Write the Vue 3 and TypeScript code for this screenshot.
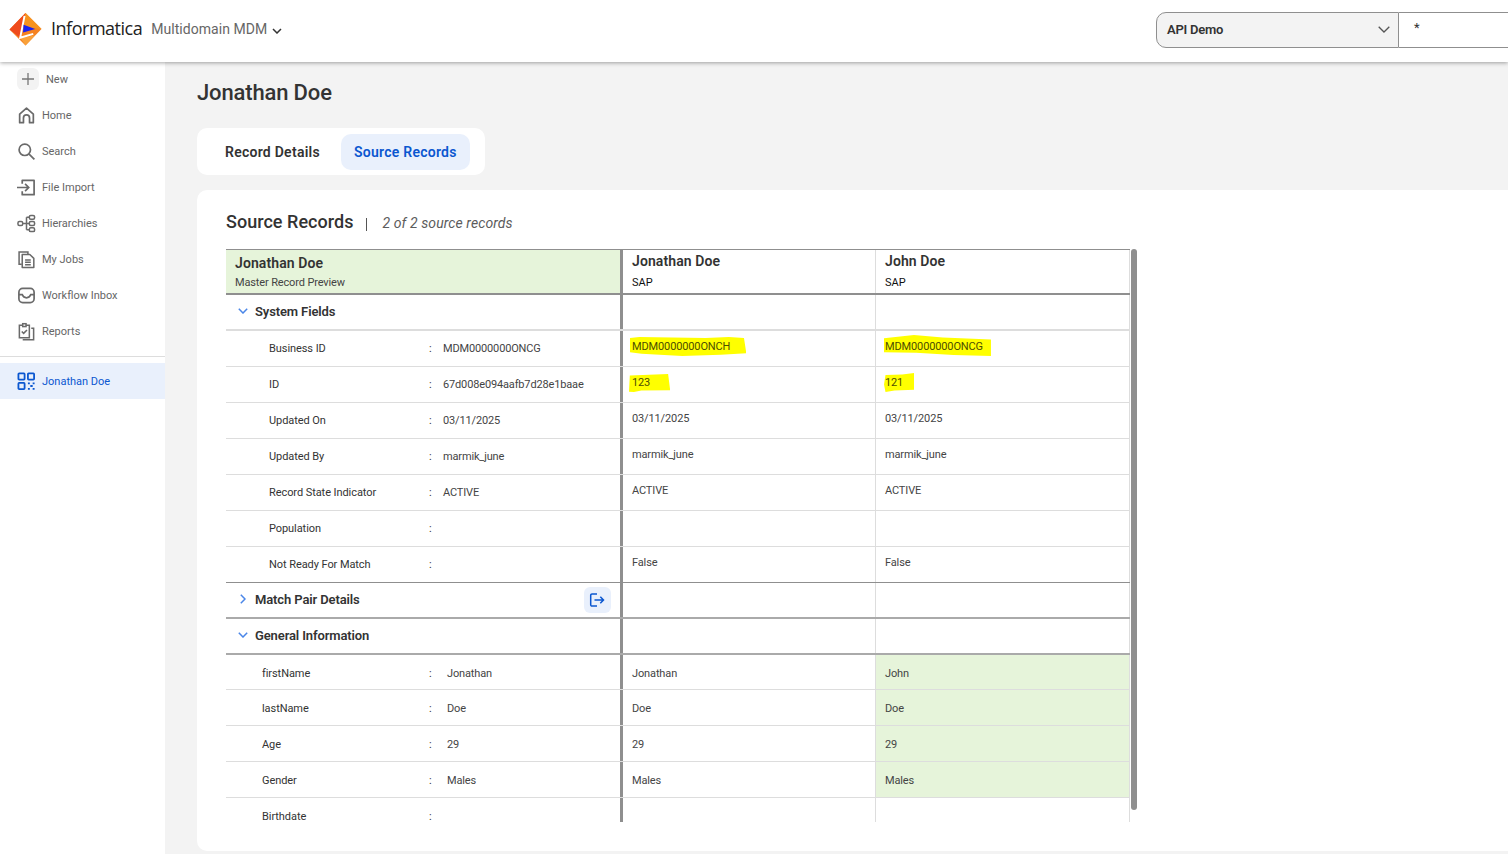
<script setup lang="ts">
interface Row { label: string; master: string; a: string; b: string; ma?: string; mb?: string }
const nav = ['Home', 'Search', 'File Import', 'Hierarchies', 'My Jobs', 'Workflow Inbox', 'Reports']
const systemRows: Row[] = [
  { label: 'Business ID', master: 'MDM0000000ONCG', a: 'MDM0000000ONCH', b: 'MDM0000000ONCG', ma: 'mk m1', mb: 'mk m2' },
  { label: 'ID', master: '67d008e094aafb7d28e1baae', a: '123', b: '121', ma: 'mk m3', mb: 'mk m4' },
  { label: 'Updated On', master: '03/11/2025', a: '03/11/2025', b: '03/11/2025' },
  { label: 'Updated By', master: 'marmik_june', a: 'marmik_june', b: 'marmik_june' },
  { label: 'Record State Indicator', master: 'ACTIVE', a: 'ACTIVE', b: 'ACTIVE' },
  { label: 'Population', master: '', a: '', b: '' },
  { label: 'Not Ready For Match', master: '', a: 'False', b: 'False' },
]
const generalRows = [
  { label: 'firstName', master: 'Jonathan', a: 'Jonathan', b: 'John', green: true },
  { label: 'lastName', master: 'Doe', a: 'Doe', b: 'Doe', green: true },
  { label: 'Age', master: '29', a: '29', b: '29', green: true },
  { label: 'Gender', master: 'Males', a: 'Males', b: 'Males', green: true },
  { label: 'Birthdate', master: '', a: '', b: '', green: false },
]
</script>

<template>
  <div class="page">
    <header class="top">
      <svg class="logo" viewBox="0 0 34 34" width="33" height="33">
        <polygon points="17,0 33.500,16.500 17,33.500 0.500,17" fill="#f58220" />
        <polygon points="0.500,17 17,0 12,26" fill="#ef4a1c" />
        <polygon points="17,0 33.500,16.500 21,15 14,12" fill="#f7931e" />
        <polygon points="12,26 17,33.500 27,23 17,25" fill="#f9a13a" />
        <polyline points="16,3 11.500,25.500 25,21.500" fill="none" stroke="#fff" stroke-width="2" />
        <polygon points="15,12 27,16.500 14.500,20" fill="#1a22f0" />
      </svg>
      <span class="brand">Informatica</span>
      <span class="product">Multidomain MDM</span>
      <svg class="prod-chev" viewBox="0 0 10 6" width="10" height="6"><path d="M1 1l4 4 4-4" fill="none" stroke="#333" stroke-width="1.500" /></svg>
      <div class="search">
        <div class="select">
          <span>API Demo</span>
          <svg viewBox="0 0 12 7" width="12" height="7"><path d="M.7.7l5.300 5.300 5.300-5.300" fill="none" stroke="#555" stroke-width="1.300" /></svg>
        </div>
        <div class="query">*</div>
      </div>
    </header>

    <div class="body">
      <aside class="side">
        <div class="new">
          <span class="plus">
            <svg viewBox="0 0 14 14" width="14" height="14"><path d="M7 1v12M1 7h12" stroke="#777" stroke-width="1.300" fill="none" /></svg>
          </span>
          <span>New</span>
        </div>
        <div v-for="n in nav" :key="n" class="nav">
          <svg viewBox="0 0 20 20" width="19" height="19" fill="none" stroke="#6a6a6a" stroke-width="1.800">
            <path v-if="n === 'Home'" d="M2.800 17.500V8.600L10 2.300l7.200 6.300v8.900h-4v-5a3.200 3.200 0 0 0-6.400 0v5z" stroke-linejoin="round" />
            <g v-else-if="n === 'Search'"><circle cx="8.200" cy="8.200" r="6" /><path d="M12.700 12.700l5.600 5.600" /></g>
            <g v-else-if="n === 'File Import'"><path d="M5.500 6V2.500h12.500v15H5.500V14" stroke-linejoin="round" /><path d="M0 10h12M8.500 6.300L12.300 10l-3.800 3.700" /></g>
            <g v-else-if="n === 'Hierarchies'" stroke-width="1.600"><rect x="1" y="8" width="5" height="4" rx="1.500" /><rect x="13" y="1.500" width="5.500" height="4" rx="1.500" /><rect x="13" y="8" width="5.500" height="4" rx="1.500" /><rect x="13" y="14.500" width="5.500" height="4" rx="1.500" /><path d="M6 10h7M10 3.500V16.500M10 3.500h3M10 16.500h3" /></g>
            <g v-else-if="n === 'My Jobs'" stroke-width="1.600"><path d="M5 15H2.200V2h9.300v2.500" /><path d="M5.500 4.800h8l4.200 4v9.500H5.500z" stroke-linejoin="round" /><path d="M8.500 10.500h6M8.500 13h6M8.500 15.500h6" /></g>
            <g v-else-if="n === 'Workflow Inbox'"><rect x="2" y="2.500" width="16" height="15" rx="4" /><path d="M2 9h3.500c1 2.500 2.500 3.500 4.500 3.500s3.500-1 4.500-3.500H18" /></g>
            <g v-else stroke-width="1.600"><path d="M6 3.500H2.500v13H13v-13H9.500" /><rect x="6" y="1.800" width="3.500" height="3" /><path d="M5 10l2 2 3.500-3.500" /><path d="M15 6.500h2.500v12.300H6" /></g>
          </svg>
          <span>{{ n }}</span>
        </div>
        <div class="rule"></div>
        <div class="nav active">
          <svg viewBox="0 0 20 20" width="19" height="19" fill="none" stroke="#0b57d0" stroke-width="1.900">
            <rect x="1.500" y="1.500" width="6.500" height="6.500" rx=".8" /><rect x="11.500" y="1.500" width="6.500" height="6.500" rx=".8" /><rect x="1.500" y="11.500" width="6.500" height="6.500" rx=".8" />
            <path d="M11.500 12h2M16.500 12h2M14 14.800h2.500M11.500 17.800h2M16.500 17.800h2" stroke-width="2" />
          </svg>
          <span>Jonathan Doe</span>
        </div>
      </aside>

      <main class="main">
        <h1 class="title">Jonathan Doe</h1>
        <div class="tabs">
          <div class="tab">Record Details</div>
          <div class="tab on">Source Records</div>
        </div>
        <section class="card">
          <div class="card-head">
            <h2>Source Records</h2>
            <i class="sep"></i>
            <em>2 of 2 source records</em>
          </div>
          <div class="table-wrap">
            <div class="table">
              <div class="row head">
                <div class="cell m green">
                  <strong>Jonathan Doe</strong>
                  <small>Master Record Preview</small>
                </div>
                <div class="cell"><strong>Jonathan Doe</strong><small class="blk">SAP</small></div>
                <div class="cell"><strong>John Doe</strong><small class="blk">SAP</small></div>
              </div>

              <div class="row sect thick">
                <div class="cell m">
                  <svg viewBox="0 0 10 6" width="10" height="6"><path d="M.8.8L5 5 9.200.8" fill="none" stroke="#4a86e8" stroke-width="1.500" /></svg>
                  <b>System Fields</b>
                </div>
                <div class="cell"></div><div class="cell"></div>
              </div>
              <div v-for="r in systemRows" :key="r.label" class="row data raised">
                <div class="cell m">
                  <span class="lab sys">{{ r.label }}</span><span class="col">:</span><span class="val">{{ r.master }}</span>
                </div>
                <div class="cell src"><span :class="r.ma">{{ r.a }}</span></div>
                <div class="cell src"><span :class="r.mb">{{ r.b }}</span></div>
              </div>

              <div class="row sect dark top-dark">
                <div class="cell m">
                  <svg class="right" viewBox="0 0 6 10" width="6" height="10"><path d="M.8.8L5 5 .8 9.200" fill="none" stroke="#4a86e8" stroke-width="1.500" /></svg>
                  <b>Match Pair Details</b>
                  <span class="go">
                    <svg viewBox="0 0 16 16" width="16" height="16" fill="none" stroke="#0b57d0" stroke-width="1.500"><path d="M8 2H3a1.300 1.300 0 0 0-1.300 1.300v9.400A1.300 1.300 0 0 0 3 14h5" /><path d="M5.500 8h9M11.300 4.800L14.500 8l-3.200 3.200" /></svg>
                  </span>
                </div>
                <div class="cell"></div><div class="cell"></div>
              </div>
              <div class="row sect dark">
                <div class="cell m">
                  <svg viewBox="0 0 10 6" width="10" height="6"><path d="M.8.8L5 5 9.200.8" fill="none" stroke="#4a86e8" stroke-width="1.500" /></svg>
                  <b>General Information</b>
                </div>
                <div class="cell"></div><div class="cell"></div>
              </div>
              <div v-for="r in generalRows" :key="r.label" class="row data general">
                <div class="cell m">
                  <span class="lab gen">{{ r.label }}</span><span class="col">:</span><span class="val gv">{{ r.master }}</span>
                </div>
                <div class="cell src"><span>{{ r.a }}</span></div>
                <div class="cell src" :class="{ green: r.green }"><span>{{ r.b }}</span></div>
              </div>
            </div>
            <div class="thumb"></div>
          </div>
        </section>
      </main>
    </div>
  </div>
</template>

<style>
html, body { margin: 0; background: #fff; overflow: hidden; }
</style>

<style scoped>
.page { width: 1508px; height: 854px; display: flex; flex-direction: column; overflow: hidden; font-family: Roboto, "Liberation Sans", sans-serif; color: #333; }
.top { height: 62px; flex: none; display: flex; align-items: center; padding: 0 0 3px 9px; background: #fff; box-shadow: 0 1px 4px rgba(0,0,0,.35); position: relative; z-index: 2; box-sizing: border-box; }
.brand { font-family: "Open Sans", sans-serif; font-size: 18px; color: #222; margin: -3px 0 0 9px; letter-spacing: -.48px; }
.product { font-size: 14px; color: #666; margin: -1px 0 0 9px; letter-spacing: .04px; }
.prod-chev { margin: 3px 0 0 5px; }
.search { margin-left: auto; width: 352px; height: 36px; display: flex; flex: none; }
.select { width: 243px; box-sizing: border-box; display: flex; align-items: center; justify-content: space-between; padding: 0 8px 0 10px; background: #f3f3f3; border: 1px solid #8f8f8f; border-radius: 10px 0 0 10px; font-size: 13px; font-weight: 600; letter-spacing: -.25px; }
.query { flex: 1; border: 1px solid #8f8f8f; border-left: none; border-right: none; padding: 7px 0 0 15px; font-size: 13px; box-sizing: border-box; }

.body { flex: 1; display: flex; min-height: 0; }
.side { width: 165px; flex: none; background: #fff; box-sizing: border-box; padding-top: 4px; }
.new { height: 26px; display: flex; align-items: center; padding-left: 17px; gap: 7px; font-size: 11px; color: #666; margin-bottom: 5px; }
.plus { width: 22px; height: 22px; border-radius: 6px; background: #f3f3f3; display: flex; align-items: center; justify-content: center; }
.nav { height: 36px; display: flex; align-items: center; gap: 6px; padding-left: 17px; font-size: 11px; color: #666; }
.rule { height: 1px; background: #ddd; margin: 7px 0 6px; }
.active { background: #e9f0fc; color: #0b57d0; }

.main { flex: 1; min-width: 0; background: #f3f3f3; padding: 17px 0 0 32px; box-sizing: border-box; display: flex; flex-direction: column; }
.title { margin: 0 0 21px; font-size: 22px; line-height: 28px; font-weight: 500; color: #333; letter-spacing: -.15px; }
.tabs { align-self: flex-start; display: flex; align-items: center; gap: 8px; background: #fff; border-radius: 10px; height: 47px; padding: 0 15px; box-sizing: border-box; margin-bottom: 15px; }
.tab { height: 36px; line-height: 36px; padding: 0 13px; font-size: 14px; font-weight: 600; color: #333; border-radius: 10px; letter-spacing: .26px; }
.tab.on { background: #e9f0fc; color: #0b57d0; }
.card { height: 661px; background: #fff; border-radius: 10px 0 0 10px; padding: 20px 0 0 29px; box-sizing: border-box; flex: none; }
.card-head { display: flex; align-items: center; height: 26px; margin-bottom: 13px; }
.card-head h2 { margin: -4px 0 0; font-size: 18px; font-weight: 500; color: #333; letter-spacing: .03px; }
.sep { width: 1px; height: 13px; background: #555; margin: 3px 15px 0 13px; }
.card-head em { font-size: 14px; color: #5c5c5c; letter-spacing: .1px; }

.table-wrap { position: relative; width: 911px; height: 573px; overflow: hidden; }
.table { width: 904px; border-top: 1px solid #8f8f8f; }
.row { display: grid; grid-template-columns: 397px 253px 254px; height: 36px; box-sizing: border-box; border-bottom: 1px solid #ddd; }
.cell { box-sizing: border-box; border-right: 1px solid #ddd; display: flex; align-items: center; min-width: 0; font-size: 11px; }
.cell:nth-child(2), .cell:nth-child(3) { padding-left: 9px; }
.cell.m { border-right: 3px solid #8f8f8f; padding-left: 0; }
.green { background: #e6f4da; }

.head { height: 45px; border-bottom: 2px solid #8f8f8f; }
.head .cell { flex-direction: column; align-items: flex-start; justify-content: flex-start; padding-top: 1px; }
.head .cell.m { padding: 3px 0 0 9px; }
.head strong { font-size: 14px; font-weight: 600; line-height: 20px; color: #333; letter-spacing: .1px; }
.head small { font-size: 11px; line-height: 14px; margin-top: 3px; color: #444; letter-spacing: -.14px; }
.head small.blk { color: #111; margin-top: 5px; letter-spacing: 0; }

.sect .cell.m { padding: 0 0 2px 12px; position: relative; }
.sect b { font-size: 13px; font-weight: 600; margin-left: 7px; color: #333; letter-spacing: -.12px; }
.sect svg.right { margin: 0 2px; }
.thick { height: 36px; border-bottom: 2px solid #ddd; }
.dark { border-bottom: 2px solid #aaa; }
.top-dark { border-top: 1px solid #8f8f8f; margin-top: -1px; height: 37px; }
.go { position: absolute; right: 9px; top: 4px; width: 27px; height: 26px; box-sizing: border-box; padding-right: 2px; border-radius: 6px; background: #e9f0fc; display: flex; align-items: center; justify-content: center; }

.lab { font-size: 11px; color: #333; flex: none; letter-spacing: -.07px; box-sizing: border-box; width: 203px; }
.lab.sys { padding-left: 43px; }
.lab.gen { padding-left: 36px; }
.col { width: 14px; flex: none; }
.val { color: #444; letter-spacing: -.15px; }
.gv { margin-left: 4px; }
.raised .src span { margin-top: -4px; }
.src span { color: #444; letter-spacing: -.13px; }
.general .cell { padding-top: 1px; }
.mk { position: relative; z-index: 0; color: #4d4d00 !important; }
.mk::before { content: ""; position: absolute; z-index: -1; background: #ffff00; }
.m1::before { left: -2px; right: -16px; top: -3px; bottom: -3px; clip-path: polygon(0 5%, 8% 0, 65% 5%, 85% 0, 98% 5%, 100% 85%, 78% 93%, 45% 100%, 10% 88%, 0 80%); }
.m2::before { left: -1px; right: -8px; top: -5px; bottom: -3px; clip-path: polygon(0 15%, 28% 0, 55% 12%, 100% 22%, 100% 100%, 65% 95%, 30% 85%, 0 82%); }
.m3::before { left: -3px; right: -20px; top: -2px; bottom: -3px; clip-path: polygon(2% 8%, 95% 0, 100% 90%, 30% 92%, 12% 100%, 0 98%); }
.m4::before { left: -1px; right: -11px; top: -3px; bottom: -3px; clip-path: polygon(5% 10%, 60% 8%, 100% 0, 100% 88%, 35% 92%, 5% 100%, 0 60%); }
.thumb { position: absolute; right: 0; top: 0; width: 6px; height: 561px; border-radius: 3px; background: #8f8f8f; }
.sect.dark + .general { height: 35px; }
.sect.dark + .general .cell { padding-top: 2px; }
</style>
